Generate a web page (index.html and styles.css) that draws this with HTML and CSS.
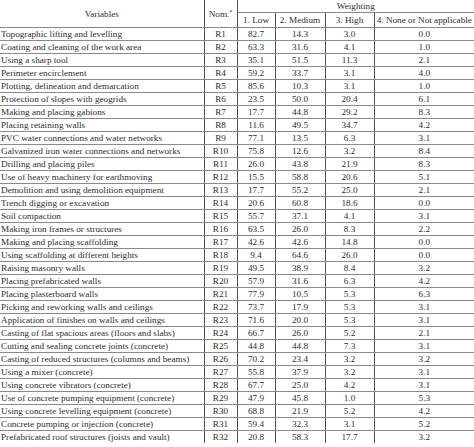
FILE: index.html
```html
<!DOCTYPE html>
<html>
<head>
<meta charset="utf-8">
<link rel="stylesheet" href="styles.css">
</head>
<body>
<table class="tbl">
<colgroup>
<col class="c-var"><col class="c-nom"><col class="c-low"><col class="c-med"><col class="c-high"><col class="c-none">
</colgroup>
<thead>
<tr class="h1"><th rowspan="2" class="var-h">Variables</th><th rowspan="2">Nom.<sup>*</sup></th><th colspan="4" class="wt">Weighting</th></tr>
<tr class="h2"><th>1. Low</th><th>2. Medium</th><th>3. High</th><th>4. None or Not applicable</th></tr>
</thead>
<tbody>
<tr><td class="v">Topographic lifting and levelling</td><td>R1</td><td>82.7</td><td>14.3</td><td>3.0</td><td>0.0</td></tr>
<tr><td class="v">Coating and cleaning of the work area</td><td>R2</td><td>63.3</td><td>31.6</td><td>4.1</td><td>1.0</td></tr>
<tr><td class="v">Using a sharp tool</td><td>R3</td><td>35.1</td><td>51.5</td><td>11.3</td><td>2.1</td></tr>
<tr><td class="v">Perimeter encirclement</td><td>R4</td><td>59.2</td><td>33.7</td><td>3.1</td><td>4.0</td></tr>
<tr><td class="v">Plotting, delineation and demarcation</td><td>R5</td><td>85.6</td><td>10.3</td><td>3.1</td><td>1.0</td></tr>
<tr><td class="v">Protection of slopes with geogrids</td><td>R6</td><td>23.5</td><td>50.0</td><td>20.4</td><td>6.1</td></tr>
<tr><td class="v">Making and placing gabions</td><td>R7</td><td>17.7</td><td>44.8</td><td>29.2</td><td>8.3</td></tr>
<tr><td class="v">Placing retaining walls</td><td>R8</td><td>11.6</td><td>49.5</td><td>34.7</td><td>4.2</td></tr>
<tr><td class="v">PVC water connections and water networks</td><td>R9</td><td>77.1</td><td>13.5</td><td>6.3</td><td>3.1</td></tr>
<tr><td class="v">Galvanized iron water connections and networks</td><td>R10</td><td>75.8</td><td>12.6</td><td>3.2</td><td>8.4</td></tr>
<tr><td class="v">Drilling and placing piles</td><td>R11</td><td>26.0</td><td>43.8</td><td>21.9</td><td>8.3</td></tr>
<tr><td class="v">Use of heavy machinery for earthmoving</td><td>R12</td><td>15.5</td><td>58.8</td><td>20.6</td><td>5.1</td></tr>
<tr><td class="v">Demolition and using demolition equipment</td><td>R13</td><td>17.7</td><td>55.2</td><td>25.0</td><td>2.1</td></tr>
<tr><td class="v">Trench digging or excavation</td><td>R14</td><td>20.6</td><td>60.8</td><td>18.6</td><td>0.0</td></tr>
<tr><td class="v">Soil compaction</td><td>R15</td><td>55.7</td><td>37.1</td><td>4.1</td><td>3.1</td></tr>
<tr><td class="v">Making iron frames or structures</td><td>R16</td><td>63.5</td><td>26.0</td><td>8.3</td><td>2.2</td></tr>
<tr><td class="v">Making and placing scaffolding</td><td>R17</td><td>42.6</td><td>42.6</td><td>14.8</td><td>0.0</td></tr>
<tr><td class="v">Using scaffolding at different heights</td><td>R18</td><td>9.4</td><td>64.6</td><td>26.0</td><td>0.0</td></tr>
<tr><td class="v">Raising masonry walls</td><td>R19</td><td>49.5</td><td>38.9</td><td>8.4</td><td>3.2</td></tr>
<tr><td class="v">Placing prefabricated walls</td><td>R20</td><td>57.9</td><td>31.6</td><td>6.3</td><td>4.2</td></tr>
<tr><td class="v">Placing plasterboard walls</td><td>R21</td><td>77.9</td><td>10.5</td><td>5.3</td><td>6.3</td></tr>
<tr><td class="v">Picking and reworking walls and ceilings</td><td>R22</td><td>73.7</td><td>17.9</td><td>5.3</td><td>3.1</td></tr>
<tr><td class="v">Application of finishes on walls and ceilings</td><td>R23</td><td>71.6</td><td>20.0</td><td>5.3</td><td>3.1</td></tr>
<tr><td class="v">Casting of flat spacious areas (floors and slabs)</td><td>R24</td><td>66.7</td><td>26.0</td><td>5.2</td><td>2.1</td></tr>
<tr><td class="v">Cutting and sealing concrete joints (concrete)</td><td>R25</td><td>44.8</td><td>44.8</td><td>7.3</td><td>3.1</td></tr>
<tr><td class="v">Casting of reduced structures (columns and beams)</td><td>R26</td><td>70.2</td><td>23.4</td><td>3.2</td><td>3.2</td></tr>
<tr><td class="v">Using a mixer (concrete)</td><td>R27</td><td>55.8</td><td>37.9</td><td>3.2</td><td>3.1</td></tr>
<tr><td class="v">Using concrete vibrators (concrete)</td><td>R28</td><td>67.7</td><td>25.0</td><td>4.2</td><td>3.1</td></tr>
<tr><td class="v">Use of concrete pumping equipment (concrete)</td><td>R29</td><td>47.9</td><td>45.8</td><td>1.0</td><td>5.3</td></tr>
<tr><td class="v">Using concrete levelling equipment (concrete)</td><td>R30</td><td>68.8</td><td>21.9</td><td>5.2</td><td>4.2</td></tr>
<tr><td class="v">Concrete pumping or injection (concrete)</td><td>R31</td><td>59.4</td><td>32.3</td><td>3.1</td><td>5.2</td></tr>
<tr><td class="v">Prefabricated roof structures (joists and vault)</td><td>R32</td><td>20.8</td><td>58.3</td><td>17.7</td><td>3.2</td></tr>
</tbody>
</table>
</body>
</html>
```
FILE: styles.css
```css
html, body {
  margin: 0;
  padding: 0;
  background: #fff;
}
.tbl {
  width: 474px;
  table-layout: fixed;
  border-collapse: collapse;
  font-family: "Liberation Serif", "DejaVu Serif", serif;
  font-size: 9.2px;
  color: #2e2e2e;
}
.c-var { width: 204px; }
.c-nom { width: 33px; }
.c-low { width: 38px; }
.c-med { width: 50px; }
.c-high { width: 49px; }
.c-none { width: 100px; }
.tbl th, .tbl td {
  padding: 0;
  text-align: center;
  font-weight: normal;
  white-space: nowrap;
  overflow: hidden;
  line-height: 12px;
  border-left: 1px solid #505050;
  border-right: 1px solid #505050;
  border-top: 1px solid #8a8a8a;
  border-bottom: 1px solid #8a8a8a;
}
.tbl tr > :first-child { border-left: none; }
.tbl tr > :last-child { border-right: none; }
.tbl td.v { text-align: left; padding-left: 1px; }
.h1 th { border-top: none; height: 12px; }
.h2 th { height: 14px; }
.tbl tbody td { height: 12px; }
.tbl tbody tr:last-child td { border-bottom: none; }
.tbl thead th[rowspan] { vertical-align: middle; }
sup { font-size: 6px; line-height: 0; vertical-align: 3px; }
```
